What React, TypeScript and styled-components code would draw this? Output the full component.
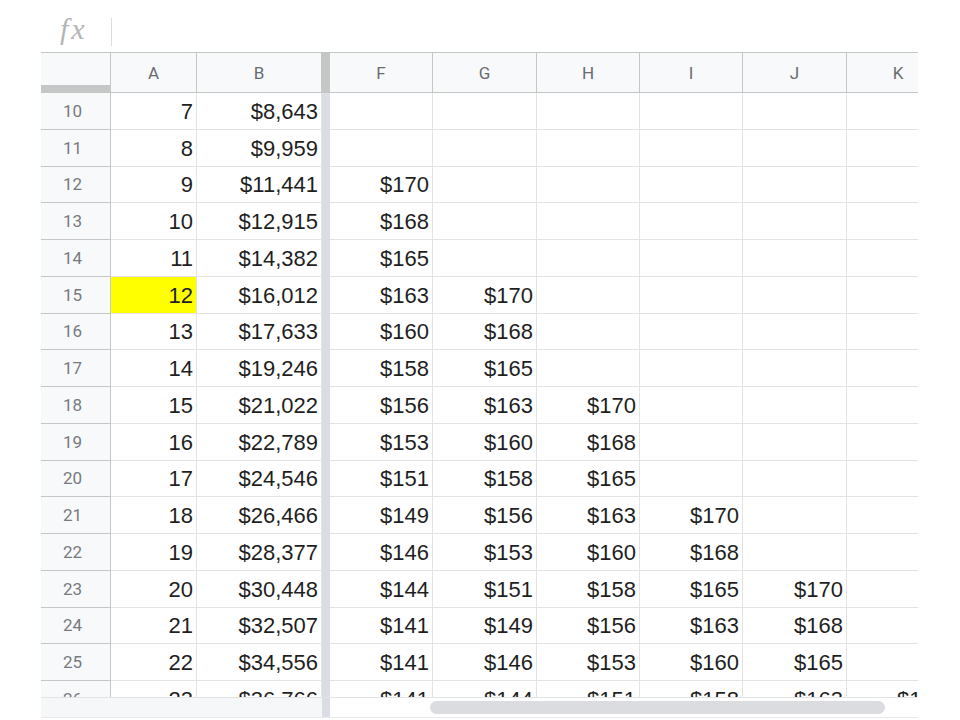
import React from "react";
import styled, { createGlobalStyle } from "styled-components";

const GlobalStyle = createGlobalStyle`
  html, body { margin: 0; padding: 0; background: #ffffff; }
  body { font-family: "Liberation Sans", Arial, sans-serif; }
  * { box-sizing: border-box; }
`;

const COLS = "70px 86px 125px 8px 103px 104px 103px 103px 104px 103px";
const ROW_H = 36.75;

const Page = styled.div`
  width: 960px;
  height: 720px;
  overflow: hidden;
  background: #fff;
`;

const FormulaBar = styled.div`
  height: 52px;
  display: flex;
  align-items: flex-end;
  padding-left: 60px;
  padding-bottom: 6px;
`;

const FxLabel = styled.span`
  font-family: "Liberation Serif", "Times New Roman", serif;
  font-style: italic;
  font-size: 30px;
  line-height: 30px;
  letter-spacing: 3px;
  color: #b4b4b4;
  width: 51px;
  margin-bottom: 2px;
`;

const Divider = styled.div`
  width: 1px;
  height: 28px;
  background: #dadce0;
`;

const Sheet = styled.div`
  margin-left: 41px;
  width: 877px;
`;

const Viewport = styled.div`
  height: 645px;
  overflow: hidden;
  border-top: 1px solid #c4c7c5;
`;

const GridRow = styled.div<{ $h: number }>`
  display: grid;
  grid-template-columns: ${COLS};
  height: ${(p) => p.$h}px;
`;

const Corner = styled.div`
  background: #f8f9fa;
  border-right: 1px solid #c4c7c5;
  border-bottom: 8px solid #c4c7c5;
`;

const ColHead = styled.div`
  background: #f8f9fa;
  border-right: 1px solid #c4c7c5;
  border-bottom: 1px solid #c4c7c5;
  display: flex;
  align-items: center;
  justify-content: center;
  font-family: Roboto, "Liberation Sans", sans-serif;
  font-size: 17px;
  color: #686c70;
`;

const FreezeBar = styled.div<{ $head?: boolean }>`
  background: ${(p) => (p.$head ? "#c4c7c5" : "#dadde3")};
`;

const RowHead = styled.div`
  background: #f8f9fa;
  border-right: 1px solid #c4c7c5;
  border-bottom: 1px solid #c4c7c5;
  display: flex;
  align-items: center;
  justify-content: center;
  padding-right: 6px;
  font-family: Roboto, "Liberation Sans", sans-serif;
  font-size: 17px;
  color: #777b80;
`;

const Cell = styled.div<{ $hl?: boolean }>`
  background: ${(p) => (p.$hl ? "#ffff00" : "#ffffff")};
  border-right: 1px solid #e2e3e3;
  border-bottom: 1px solid #e2e3e3;
  display: flex;
  align-items: center;
  justify-content: flex-end;
  padding-right: 3px;
  padding-top: 2px;
  font-family: "Liberation Sans", Arial, sans-serif;
  font-size: 22px;
  color: #1f1f1f;
  white-space: nowrap;
`;

const ScrollStrip = styled.div`
  height: 21px;
  display: grid;
  grid-template-columns: 281px 8px 1fr;
  border-top: 1px solid #e2e3e3;
  border-bottom: 1px solid #e8eaed;
`;

const FrozenScroll = styled.div`
  background: #f6f7f8;
`;

const ScrollTrack = styled.div`
  display: flex;
  align-items: center;
  padding-left: 100px;
  padding-right: 33px;
`;

const Thumb = styled.div`
  flex: 1;
  height: 13px;
  border-radius: 7px;
  background: #dadce0;
`;

type RowData = { n: number; a: string; b: string; rest: string[] };

const rows: RowData[] = [
  { n: 10, a: "7", b: "$8,643", rest: [] },
  { n: 11, a: "8", b: "$9,959", rest: [] },
  { n: 12, a: "9", b: "$11,441", rest: ["$170"] },
  { n: 13, a: "10", b: "$12,915", rest: ["$168"] },
  { n: 14, a: "11", b: "$14,382", rest: ["$165"] },
  { n: 15, a: "12", b: "$16,012", rest: ["$163", "$170"] },
  { n: 16, a: "13", b: "$17,633", rest: ["$160", "$168"] },
  { n: 17, a: "14", b: "$19,246", rest: ["$158", "$165"] },
  { n: 18, a: "15", b: "$21,022", rest: ["$156", "$163", "$170"] },
  { n: 19, a: "16", b: "$22,789", rest: ["$153", "$160", "$168"] },
  { n: 20, a: "17", b: "$24,546", rest: ["$151", "$158", "$165"] },
  { n: 21, a: "18", b: "$26,466", rest: ["$149", "$156", "$163", "$170"] },
  { n: 22, a: "19", b: "$28,377", rest: ["$146", "$153", "$160", "$168"] },
  { n: 23, a: "20", b: "$30,448", rest: ["$144", "$151", "$158", "$165", "$170"] },
  { n: 24, a: "21", b: "$32,507", rest: ["$141", "$149", "$156", "$163", "$168"] },
  { n: 25, a: "22", b: "$34,556", rest: ["$141", "$146", "$153", "$160", "$165"] },
  { n: 26, a: "23", b: "$36,766", rest: ["$141", "$144", "$151", "$158", "$163", "$170"] },
];

const headers = ["F", "G", "H", "I", "J", "K"];

export default function App() {
  return (
    <Page>
      <GlobalStyle />
      <FormulaBar>
        <FxLabel>fx</FxLabel>
        <Divider />
      </FormulaBar>
      <Sheet>
        <Viewport>
          <GridRow $h={40}>
            <Corner />
            <ColHead>A</ColHead>
            <ColHead>B</ColHead>
            <FreezeBar $head />
            {headers.map((h) => (
              <ColHead key={h}>{h}</ColHead>
            ))}
          </GridRow>
          {rows.map((r) => (
            <GridRow key={r.n} $h={ROW_H}>
              <RowHead>{r.n}</RowHead>
              <Cell $hl={r.n === 15}>{r.a}</Cell>
              <Cell>{r.b}</Cell>
              <FreezeBar />
              {headers.map((h, i) => (
                <Cell key={h}>{r.rest[i] ?? ""}</Cell>
              ))}
            </GridRow>
          ))}
        </Viewport>
        <ScrollStrip>
          <FrozenScroll />
          <FreezeBar />
          <ScrollTrack>
            <Thumb />
          </ScrollTrack>
        </ScrollStrip>
      </Sheet>
    </Page>
  );
}
